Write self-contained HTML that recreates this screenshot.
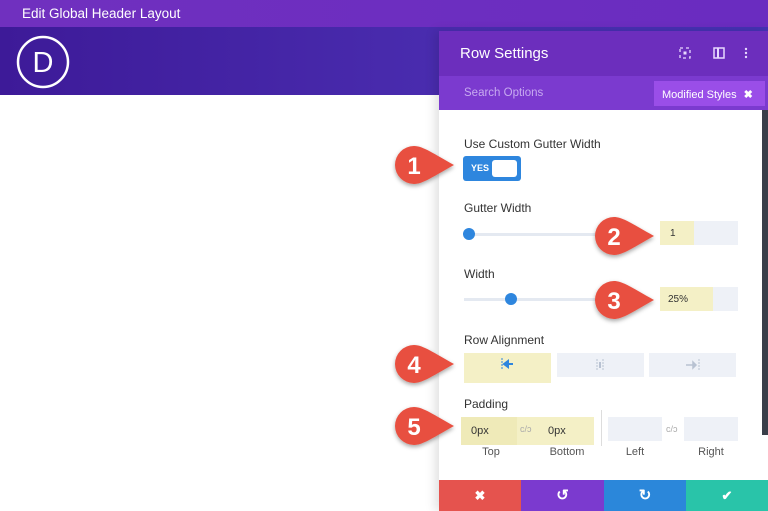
<!DOCTYPE html>
<html><head><meta charset="utf-8"><style>
*{margin:0;padding:0;box-sizing:border-box}
body{width:768px;height:511px;overflow:hidden;background:#fff;font-family:"Liberation Sans",sans-serif;position:relative}
.abs{position:absolute}
.top{left:0;top:0;width:768px;height:27px;background:linear-gradient(90deg,#7030bf,#6a2cc0);color:#fff;font-size:13.5px;padding:6px 0 0 22px}
.hdr{left:0;top:27px;width:768px;height:68px;background:linear-gradient(90deg,#3d1a98,#4a2db0 60%,#4532b4)}
.panel{left:439px;top:31px;width:329px;height:480px;background:#fff;box-shadow:-4px 0 10px rgba(0,0,0,.12)}
.ph{left:0;top:0;width:329px;height:45px;background:#6c2ebd;color:#fff;font-size:15px;padding:14px 0 0 21px}
.ps{left:0;top:45px;width:329px;height:34px;background:#7b3acf;color:#c7aaf0;font-size:11.5px;padding:11px 0 0 25px}
.mod{left:215px;top:50px;width:111px;height:25px;background:#9a4ee8;color:#fff;font-size:11px;padding:7px 0 0 8px}
.lbl{font-size:12px;color:#333}
.in{background:#eef1f7}
.yl{background:#f4f0c6}
.track{height:3px;background:#e4e9f1}
.dot{width:12px;height:12px;border-radius:50%;background:#2e86de}
.sub{font-size:11px;color:#555;text-align:center}
</style></head><body>
<div class="abs top">Edit Global Header Layout</div>
<div class="abs hdr">
<svg class="abs" style="left:15px;top:7px" width="56" height="56"><circle cx="28" cy="28" r="25" fill="none" stroke="#fff" stroke-width="2.5"/><text x="28" y="38" font-size="29" fill="#fff" text-anchor="middle" font-family="Liberation Sans">D</text></svg>
</div>
<div class="abs panel">
<div class="abs ph">Row Settings</div>
<svg class="abs" style="left:240px;top:16px" width="80" height="14"><rect x="1" y="1" width="10" height="10" fill="none" stroke="#e8d8ff" stroke-width="1.3" stroke-dasharray="3 3"/><rect x="4.5" y="4.5" width="3" height="3" fill="#e8d8ff"/><rect x="35" y="1" width="10" height="10" fill="none" stroke="#e8d8ff" stroke-width="1.5"/><rect x="38" y="1" width="2" height="10" fill="#e8d8ff"/><circle cx="67" cy="2" r="1.2" fill="#e8d8ff"/><circle cx="67" cy="6" r="1.2" fill="#e8d8ff"/><circle cx="67" cy="10" r="1.2" fill="#e8d8ff"/></svg>
<div class="abs ps">Search Options</div>
<div class="abs mod">Modified Styles <b style="margin-left:4px">✖</b></div>
<div class="abs" style="left:323px;top:79px;width:6px;height:325px;background:#3a3f4a"></div>
<div class="abs lbl" style="left:25px;top:106px">Use Custom Gutter Width</div>
<div class="abs" style="left:24px;top:125px;width:58px;height:25px;background:#2e86de;border-radius:3px"><span class="abs" style="left:8px;top:7px;font-size:9px;color:#fff;font-weight:bold">YES</span><span class="abs" style="left:29px;top:4px;width:25px;height:17px;background:#fff;border-radius:3px"></span></div>
<div class="abs lbl" style="left:25px;top:170px">Gutter Width</div>
<div class="abs track" style="left:25px;top:202px;width:185px"></div>
<div class="abs dot" style="left:24px;top:197px"></div>
<div class="abs in" style="left:221px;top:190px;width:78px;height:24px"></div>
<div class="abs yl" style="left:221px;top:190px;width:34px;height:24px;font-size:10px;padding:7px 0 0 10px;color:#333">1</div>
<div class="abs lbl" style="left:25px;top:236px">Width</div>
<div class="abs track" style="left:25px;top:267px;width:185px"></div>
<div class="abs dot" style="left:66px;top:262px"></div>
<div class="abs in" style="left:221px;top:256px;width:78px;height:24px"></div>
<div class="abs yl" style="left:221px;top:256px;width:53px;height:24px;font-size:10px;padding:7px 0 0 8px;color:#333">25%</div>
<div class="abs lbl" style="left:25px;top:302px">Row Alignment</div>
<div class="abs yl" style="left:25px;top:322px;width:87px;height:30px"></div>
<div class="abs in" style="left:118px;top:322px;width:87px;height:24px"></div>
<div class="abs in" style="left:210px;top:322px;width:87px;height:24px"></div>
<svg class="abs" style="left:60px;top:326px" width="20" height="14"><line x1="3" y1="1" x2="3" y2="13" stroke="#2e86de" stroke-dasharray="2 1"/><path d="M5 7 L14 7 M5 7 L9 4 L9 10 Z" stroke="#2e86de" fill="#2e86de" stroke-width="2"/></svg>
<svg class="abs" style="left:154px;top:327px" width="14" height="14"><path d="M4 1V13M10 1V13" stroke="#b8c2d2" stroke-dasharray="2 1"/><rect x="6" y="4" width="2" height="6" fill="#b8c2d2"/></svg>
<svg class="abs" style="left:245px;top:327px" width="20" height="14"><line x1="15" y1="1" x2="15" y2="13" stroke="#b8c2d2" stroke-dasharray="2 1"/><path d="M2 7 L12 7 M12 7 L9 4 L9 10 Z" stroke="#b8c2d2" fill="#b8c2d2" stroke-width="1.5"/></svg>
<div class="abs lbl" style="left:25px;top:366px">Padding</div>
<div class="abs yl" style="left:22px;top:386px;width:133px;height:28px"></div>
<div class="abs" style="left:22px;top:386px;width:56px;height:28px;font-size:11px;padding:8px 0 0 10px;color:#333;background:#efeab8">0px</div>
<div class="abs" style="left:100px;top:386px;width:55px;height:28px;font-size:11px;padding:8px 0 0 9px;color:#333">0px</div>
<div class="abs" style="left:81px;top:393px;font-size:9px;color:#aaa">c/ɔ</div>
<div class="abs" style="left:162px;top:379px;width:1px;height:36px;background:#ddd"></div>
<div class="abs in" style="left:169px;top:386px;width:54px;height:24px"></div>
<div class="abs" style="left:227px;top:393px;font-size:9px;color:#aaa">c/ɔ</div>
<div class="abs in" style="left:245px;top:386px;width:54px;height:24px"></div>
<div class="abs sub" style="left:22px;top:415px;width:60px">Top</div>
<div class="abs sub" style="left:98px;top:415px;width:60px">Bottom</div>
<div class="abs sub" style="left:166px;top:415px;width:60px">Left</div>
<div class="abs sub" style="left:242px;top:415px;width:60px">Right</div>
</div>
<div class="abs" style="left:439px;top:480px;width:82px;height:31px;background:#e5534e;color:#fff;text-align:center;font-size:13px;padding-top:8px;font-weight:bold">✖</div>
<div class="abs" style="left:521px;top:480px;width:83px;height:31px;background:#7b3acf;color:#fff;text-align:center;font-size:15px;padding-top:6px;font-weight:bold">↺</div>
<div class="abs" style="left:604px;top:480px;width:82px;height:31px;background:#2b87da;color:#fff;text-align:center;font-size:15px;padding-top:6px;font-weight:bold">↻</div>
<div class="abs" style="left:686px;top:480px;width:82px;height:31px;background:#29c4a9;color:#fff;text-align:center;font-size:13px;padding-top:8px;font-weight:bold">✔</div>
<svg class="abs" style="left:0;top:0" width="768" height="511">
<defs><filter id="s" x="-30%" y="-30%" width="160%" height="170%"><feDropShadow dx="0" dy="2" stdDeviation="2" flood-opacity=".35"/></filter></defs>
<g font-family="Liberation Sans" font-size="24" fill="#fff" text-anchor="middle" font-weight="bold">
<g filter="url(#s)" fill="#e8503f"><path d="M414 146a19 19 0 1 0 0 38c9 0 20-8 40-19c-20-11-31-19-40-19z"/>
<path d="M614 217a19 19 0 1 0 0 38c9 0 20-8 40-19c-20-11-31-19-40-19z"/>
<path d="M614 281a19 19 0 1 0 0 38c9 0 20-8 40-19c-20-11-31-19-40-19z"/>
<path d="M414 345a19 19 0 1 0 0 38c9 0 20-8 40-19c-20-11-31-19-40-19z"/>
<path d="M414 407a19 19 0 1 0 0 38c9 0 20-8 40-19c-20-11-31-19-40-19z"/></g>
<text x="414" y="174">1</text><text x="614" y="245">2</text><text x="614" y="309">3</text><text x="414" y="373">4</text><text x="414" y="435">5</text>
</g></svg>
</body></html>
